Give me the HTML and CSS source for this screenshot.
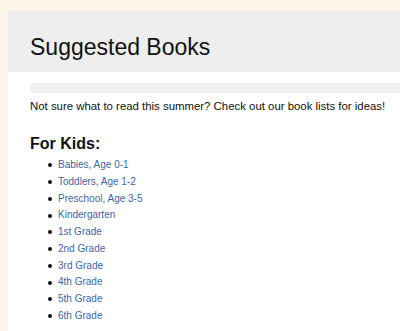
FILE: index.html
```html
<!DOCTYPE html>
<html>
<head>
<meta charset="utf-8">
<link rel="stylesheet" href="styles.css">
</head>
<body>
<div class="card">
  <div class="header"><h1 class="title">Suggested Books</h1></div>
  <div class="content">
    <div class="bar"></div>
    <p class="intro">Not sure what to read this summer? Check out our book lists for ideas!</p>
    <h2 class="section">For Kids:</h2>
    <ul class="list">
      <li><a href="#">Babies, Age 0-1</a></li>
      <li><a href="#">Toddlers, Age 1-2</a></li>
      <li><a href="#">Preschool, Age 3-5</a></li>
      <li><a href="#">Kindergarten</a></li>
      <li><a href="#">1st Grade</a></li>
      <li><a href="#">2nd Grade</a></li>
      <li><a href="#">3rd Grade</a></li>
      <li><a href="#">4th Grade</a></li>
      <li><a href="#">5th Grade</a></li>
      <li><a href="#">6th Grade</a></li>
    </ul>
  </div>
</div>
</body>
</html>
```

FILE: styles.css
```css
html, body {
  margin: 0;
  padding: 0;
}
body {
  background: #fdf5e8;
  font-family: "Liberation Sans", Arial, sans-serif;
  color: #111;
  padding: 11px 0 0 8px;
  overflow: hidden;
}
.card {
  background: #fff;
  min-height: 330px;
}
.header {
  background: #eeeeee;
  height: 61px;
  padding: 0 0 0 22px;
  display: flex;
  align-items: flex-end;
}
.title {
  margin: 0 0 12px 0;
  font-size: 23px;
  font-weight: normal;
  line-height: 26px;
  color: #111;
}
.content {
  padding: 11px 0 0 22px;
}
.bar {
  height: 10px;
  background: #efefef;
  border-radius: 4px 0 0 4px;
}
.intro {
  margin: 5px 0 0 0;
  font-size: 11.4px;
  line-height: 16px;
  white-space: nowrap;
}
.section {
  margin: 20px 0 0 0;
  font-size: 16px;
  line-height: 20px;
  font-weight: bold;
}
.list {
  margin: 3px 0 0 0;
  padding: 0 0 0 28px;
  font-size: 10px;
  line-height: 16.75px;
  list-style: none;
}
.list li {
  height: 16.75px;
  display: flex;
  align-items: center;
}
.list li::before {
  content: "";
  width: 4px;
  height: 4px;
  border-radius: 50%;
  background: #111;
  margin: 0 6px 0 -10px;
  flex: none;
}
.list a {
  color: #3b66a6;
  text-decoration: none;
}
```
